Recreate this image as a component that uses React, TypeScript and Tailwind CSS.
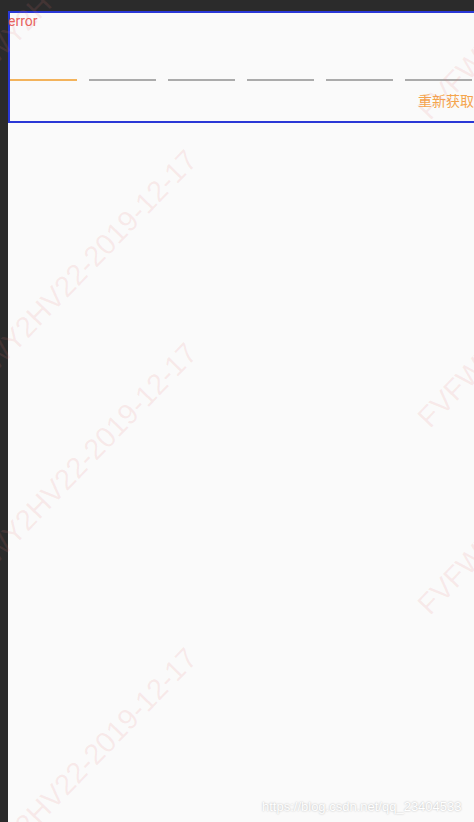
const marks: { x: number; y: number }[] = [
  { x: -40, y: 108 },
  { x: -40, y: 415 },
  { x: -40, y: 608 },
  { x: -40, y: 913 },
  { x: 433, y: 124 },
  { x: 433, y: 432 },
  { x: 433, y: 619 },
];

function CodeInput({ count = 6, active = 0 }: { count?: number; active?: number }) {
  return (
    <div className="flex gap-[12px]">
      {Array.from({ length: count }).map((_, i) => (
        <div
          key={i}
          className={
            i === active
              ? "w-[67px] h-[2px] bg-[#f3b35c] shrink-0"
              : "w-[67px] h-[2px] bg-[#ababab] shrink-0"
          }
        />
      ))}
    </div>
  );
}

export default function App() {
  return (
    <div
      className="relative h-[822px] w-full overflow-hidden bg-[#2b2b2b] pl-[8px] pt-[11px]"
      style={{ fontFamily: "Roboto, 'Noto Sans CJK SC', sans-serif" }}
    >
      <div className="h-full bg-[#fafafa]">
        {/* verification code box */}
        <div className="w-[480px] h-[112px] border-2 border-[#2a38d6] flex flex-col">
          <span className="text-[14px] leading-[17px] text-[#e8625d] -ml-[2px]">error</span>
          <div className="mt-[49px]">
            <CodeInput />
          </div>
          <div className="mt-[10px] flex justify-end pr-[12px]">
            <span className="text-[14px] leading-[20px] text-[#f5a54c]">重新获取</span>
          </div>
        </div>
      </div>

      {/* watermarks */}
      <div className="pointer-events-none absolute inset-0">
        {marks.map((m, i) => (
          <span
            key={i}
            className="absolute whitespace-nowrap text-[29px] leading-[28px] text-[#e67878]/[0.13] origin-bottom-left -rotate-[46deg]"
            style={{ left: m.x, top: m.y - 28, fontFamily: "'Liberation Sans', sans-serif" }}
          >
            FVFWY2HV22-2019-12-17
          </span>
        ))}
        <span
          className="absolute left-[262px] top-[798px] text-[13px] leading-[18px] text-white whitespace-nowrap [text-shadow:0_0_2px_rgba(0,0,0,0.3)]"
          style={{ fontFamily: "'Liberation Sans', sans-serif" }}
        >
          https://blog.csdn.net/qq_23404533
        </span>
      </div>
    </div>
  );
}
